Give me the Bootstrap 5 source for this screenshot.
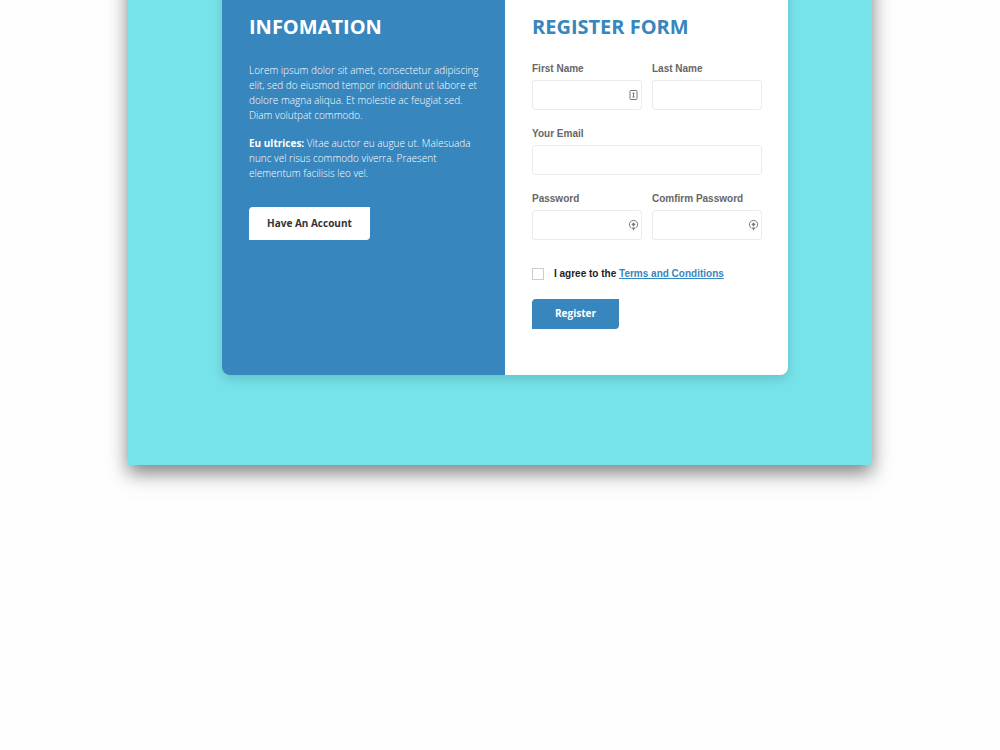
<!DOCTYPE html>
<html lang="en">
<head>
<meta charset="utf-8">
<meta name="viewport" content="width=device-width, initial-scale=1">
<title>Register Form</title>
<link href="https://cdn.jsdelivr.net/npm/bootstrap@5.3.0/dist/css/bootstrap.min.css" rel="stylesheet">
<style>
  :root { --brand: #3786bd; --aqua: #76e3ea; }
  body { font-family: "Open Sans", sans-serif; font-size: 10px; background: #fefefe; }
  .stage { max-width: 744px; background: var(--aqua); margin-top: -48px; padding: 0 84px 90px 94px; box-shadow: 0 8px 18px rgba(0,0,0,.5); }
  .panel { border-radius: 0 0 8px 8px; box-shadow: 0 4px 12px rgba(0,0,0,.15); overflow: hidden; }
  .pane { padding: 63px 26px 46px 27px; }
  .pane-info { background: var(--brand); }
  .pane-title { font-size: 20px; line-height: 24px; font-weight: 700; }
  .pane-info .pane-title { margin-bottom: 24px; }
  .pane-form .pane-title { color: var(--brand); margin-bottom: 22px; }
  .copy { font-weight: 300; line-height: 15px; margin-bottom: 13px; }
  .copy b { font-weight: 700; }
  .field-row { --bs-gutter-x: 10px; }
  .field-label { font: 700 10px/16px "Liberation Sans", Arial, sans-serif; color: #666; margin-bottom: 3px; }
  .field { height: 30px; border: 1px solid #eaecec; border-radius: 3px; font-size: 10px; padding: 4px 8px; }
  .field-icon { position: absolute; right: 3px; top: 9px; width: 11px; height: 12px; pointer-events: none; }
  .cut { border: 0; border-radius: 4px 0; font-size: 10px; line-height: 15px; font-weight: 700; }
  .cut-light { background: #fff; color: #333; padding: 9px 18px; margin-top: 13px; }
  .cut-brand, .cut-brand:hover { background: var(--brand); color: #fff; padding: 7px 23px 8px; }
  .agree { font: 700 10px/14px "Liberation Sans", Arial, sans-serif; color: #222; margin: 27px 0 18px; gap: 10px; }
  .agree .form-check-input { width: 12px; height: 12px; border-radius: 0; border-color: #ccc; }
  .agree a { color: var(--brand); }
</style>
</head>
<body>
<main class="overflow-hidden pb-5">
  <div class="stage mx-auto">
    <div class="panel row g-0">
      <section class="pane pane-info col-sm-6 text-white">
        <h2 class="pane-title">INFOMATION</h2>
        <p class="copy">Lorem ipsum dolor sit amet, consectetur adipiscing elit, sed do eiusmod tempor incididunt ut labore et dolore magna aliqua. Et molestie ac feugiat sed. Diam volutpat commodo.</p>
        <p class="copy"><b>Eu ultrices:</b> Vitae auctor eu augue ut. Malesuada nunc vel risus commodo viverra. Praesent elementum facilisis leo vel.</p>
        <button type="button" class="btn cut cut-light">Have An Account</button>
      </section>
      <form class="pane pane-form col-sm-6 bg-white">
        <h2 class="pane-title">REGISTER FORM</h2>
        <div class="row field-row mb-3">
          <div class="col-6">
            <label class="field-label d-block" for="first">First Name</label>
            <div class="position-relative">
              <input class="form-control field" type="text" id="first">
              <svg class="field-icon" viewBox="0 0 11 12" fill="none" stroke="#777"><rect x="2" y="1.5" width="7" height="9" rx="1"/><path d="M5.5 4v4M4.4 8h2.2"/><circle cx="5.5" cy="4.4" r=".6"/></svg>
            </div>
          </div>
          <div class="col-6">
            <label class="field-label d-block" for="last">Last Name</label>
            <input class="form-control field" type="text" id="last">
          </div>
        </div>
        <div class="mb-3">
          <label class="field-label d-block" for="email">Your Email</label>
          <input class="form-control field" type="email" id="email">
        </div>
        <div class="row field-row">
          <div class="col-6">
            <label class="field-label d-block" for="pass">Password</label>
            <div class="position-relative">
              <input class="form-control field" type="password" id="pass">
              <svg class="field-icon" viewBox="0 0 11 12" fill="none" stroke="#777"><path d="M3.4 9A4.1 4.1 0 1 1 7.6 9"/><circle cx="5.5" cy="5.5" r="1.4" fill="#777" stroke="none"/><path d="M5.5 3.4v4.2M3.6 5.5h3.8" stroke-width=".7"/><path d="M3.6 8.4h3.8L5.5 11.4z" fill="#777" stroke="none"/></svg>
            </div>
          </div>
          <div class="col-6">
            <label class="field-label d-block" for="pass2">Comfirm Password</label>
            <div class="position-relative">
              <input class="form-control field" type="password" id="pass2">
              <svg class="field-icon" viewBox="0 0 11 12" fill="none" stroke="#777"><path d="M3.4 9A4.1 4.1 0 1 1 7.6 9"/><circle cx="5.5" cy="5.5" r="1.4" fill="#777" stroke="none"/><path d="M5.5 3.4v4.2M3.6 5.5h3.8" stroke-width=".7"/><path d="M3.6 8.4h3.8L5.5 11.4z" fill="#777" stroke="none"/></svg>
            </div>
          </div>
        </div>
        <div class="agree d-flex align-items-center">
          <input class="form-check-input m-0 flex-shrink-0" type="checkbox" id="agree">
          <label for="agree">I agree to the <a href="#">Terms and Conditions</a></label>
        </div>
        <button type="submit" class="btn cut cut-brand">Register</button>
      </form>
    </div>
  </div>
</main>
<script src="https://cdn.jsdelivr.net/npm/bootstrap@5.3.0/dist/js/bootstrap.bundle.min.js"></script>
</body>
</html>
